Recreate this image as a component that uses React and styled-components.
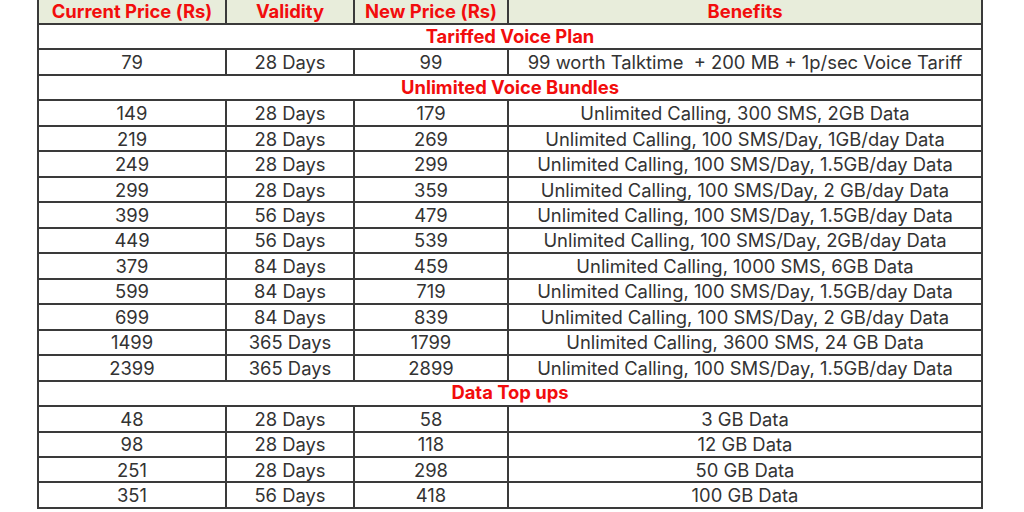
import React from "react";
import styled, { createGlobalStyle } from "styled-components";

const GlobalStyle = createGlobalStyle`
  body {
    margin: 0;
    background: #ffffff;
    font-family: "Inter", "Liberation Sans", sans-serif;
  }
`;

const sections = [
  {
    title: "Tariffed Voice Plan",
    rows: [["79", "28 Days", "99", "99 worth Talktime  + 200 MB + 1p/sec Voice Tariff"]],
  },
  {
    title: "Unlimited Voice Bundles",
    rows: [
      ["149", "28 Days", "179", "Unlimited Calling, 300 SMS, 2GB Data"],
      ["219", "28 Days", "269", "Unlimited Calling, 100 SMS/Day, 1GB/day Data"],
      ["249", "28 Days", "299", "Unlimited Calling, 100 SMS/Day, 1.5GB/day Data"],
      ["299", "28 Days", "359", "Unlimited Calling, 100 SMS/Day, 2 GB/day Data"],
      ["399", "56 Days", "479", "Unlimited Calling, 100 SMS/Day, 1.5GB/day Data"],
      ["449", "56 Days", "539", "Unlimited Calling, 100 SMS/Day, 2GB/day Data"],
      ["379", "84 Days", "459", "Unlimited Calling, 1000 SMS, 6GB Data"],
      ["599", "84 Days", "719", "Unlimited Calling, 100 SMS/Day, 1.5GB/day Data"],
      ["699", "84 Days", "839", "Unlimited Calling, 100 SMS/Day, 2 GB/day Data"],
      ["1499", "365 Days", "1799", "Unlimited Calling, 3600 SMS, 24 GB Data"],
      ["2399", "365 Days", "2899", "Unlimited Calling, 100 SMS/Day, 1.5GB/day Data"],
    ],
  },
  {
    title: "Data Top ups",
    rows: [
      ["48", "28 Days", "58", "3 GB Data"],
      ["98", "28 Days", "118", "12 GB Data"],
      ["251", "28 Days", "298", "50 GB Data"],
      ["351", "56 Days", "418", "100 GB Data"],
    ],
  },
];

const Page = styled.div`
  padding-left: 37px;
  margin-top: -2px;
`;

const Table = styled.table`
  border-collapse: collapse;
  table-layout: fixed;
  width: 944px;
`;

const Row = styled.tr`
  height: 25.47px;
`;

const HeadCell = styled.th`
  background: #e8eddb;
  color: #f20d0d;
  font-weight: 700;
  font-size: 18.4px;
  height: 23px;
  padding: 0;
  border: 2px solid #3a3a3a;
  text-align: center;
  white-space: nowrap;
  line-height: 21px;
`;

const SectionCell = styled.td`
  color: #f20d0d;
  font-weight: 700;
  font-size: 18.4px;
  padding: 0 0 2px;
  border: 2px solid #3a3a3a;
  text-align: center;
  line-height: 20px;
  overflow: hidden;
`;

const Cell = styled.td`
  color: #333333;
  font-size: 18.4px;
  padding: 0;
  border: 2px solid #3a3a3a;
  text-align: center;
  white-space: pre;
  line-height: 20px;
  overflow: hidden;
`;

export default function App() {
  return (
    <>
      <GlobalStyle />
      <Page>
        <Table>
          <colgroup>
            <col style={{ width: 188 }} />
            <col style={{ width: 128 }} />
            <col style={{ width: 154 }} />
            <col style={{ width: 474 }} />
          </colgroup>
          <thead>
            <tr>
              <HeadCell>Current Price (Rs)</HeadCell>
              <HeadCell>Validity</HeadCell>
              <HeadCell>New Price (Rs)</HeadCell>
              <HeadCell>Benefits</HeadCell>
            </tr>
          </thead>
          <tbody>
            {sections.map((section) => (
              <React.Fragment key={section.title}>
                <Row>
                  <SectionCell colSpan={4}>{section.title}</SectionCell>
                </Row>
                {section.rows.map((row, i) => (
                  <Row key={i}>
                    {row.map((value, j) => (
                      <Cell key={j}>{value}</Cell>
                    ))}
                  </Row>
                ))}
              </React.Fragment>
            ))}
          </tbody>
        </Table>
      </Page>
    </>
  );
}
